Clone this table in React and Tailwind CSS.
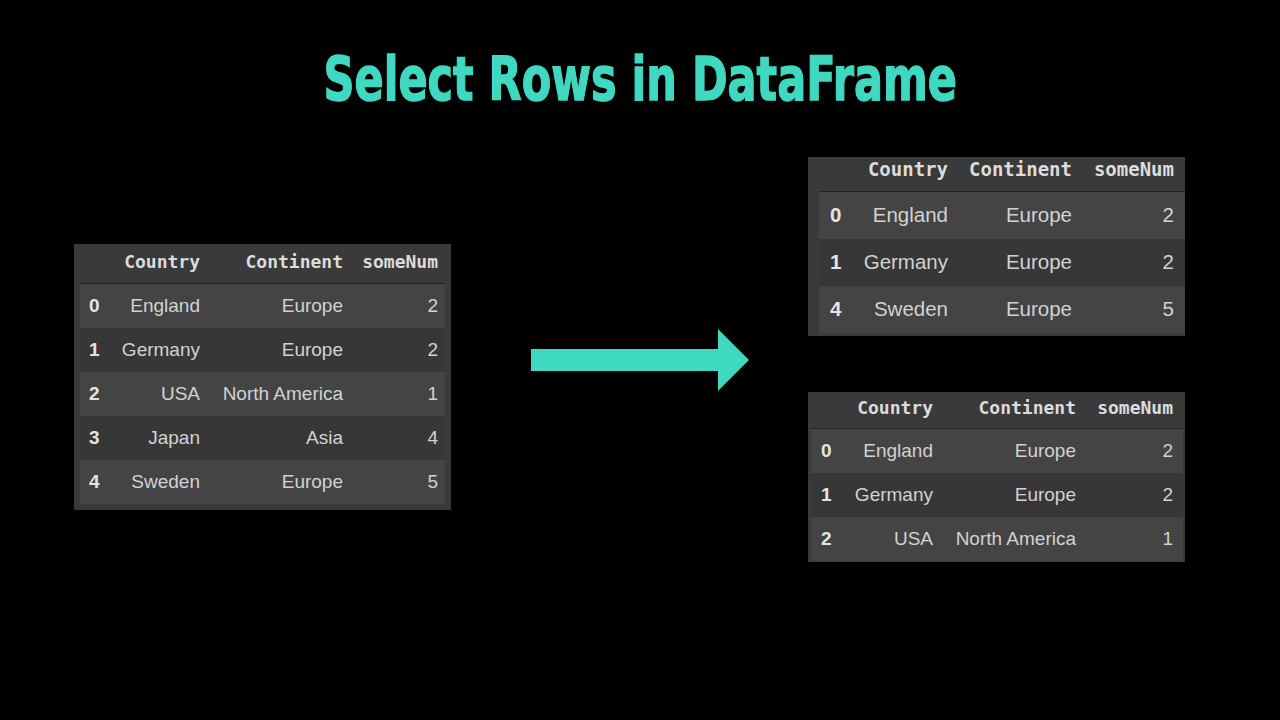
import React from "react";

const leftRows = [
  ["0", "England", "Europe", "2"],
  ["1", "Germany", "Europe", "2"],
  ["2", "USA", "North America", "1"],
  ["3", "Japan", "Asia", "4"],
  ["4", "Sweden", "Europe", "5"],
];
const r1Rows = [
  ["0", "England", "Europe", "2"],
  ["1", "Germany", "Europe", "2"],
  ["4", "Sweden", "Europe", "5"],
];
const r2Rows = [
  ["0", "England", "Europe", "2"],
  ["1", "Germany", "Europe", "2"],
  ["2", "USA", "North America", "1"],
];

const mono = { fontFamily: '"DejaVu Sans Mono", "Liberation Mono", monospace' };
const sans = { fontFamily: '"Liberation Sans", Arial, sans-serif' };

function DF({ rows, widths, headH, headPb, rowH, headSize, bodySize, idxPl, cellPr, box }) {
  return (
    <div className={box}>
      <div className="flex border-b border-[#232323]" style={{ height: headH, paddingBottom: headPb }}>
        <div style={{ width: widths[0] }} />
        {["Country", "Continent", "someNum"].map((h, i) => (
          <div
            key={h}
            className="flex items-center justify-end font-bold text-[#dcdcdc]"
            style={{ ...mono, width: widths[i + 1], paddingRight: cellPr, fontSize: headSize }}
          >
            {h}
          </div>
        ))}
      </div>
      {rows.map((r, ri) => (
        <div
          key={ri}
          className={`flex ${ri % 2 === 0 ? "bg-[#444444]" : "bg-[#373737]"}`}
          style={{ height: rowH }}
        >
          <div
            className="flex items-center font-bold text-[#e4e4e4]"
            style={{ ...sans, width: widths[0], paddingLeft: idxPl, fontSize: bodySize }}
          >
            {r[0]}
          </div>
          {r.slice(1).map((c, ci) => (
            <div
              key={ci}
              className="flex items-center justify-end text-[#d2d2d2] whitespace-nowrap"
              style={{ ...sans, width: widths[ci + 1], paddingRight: cellPr, fontSize: bodySize }}
            >
              {c}
            </div>
          ))}
        </div>
      ))}
    </div>
  );
}

export default function App() {
  return (
    <div className="w-[1280px] h-[720px] bg-black overflow-hidden">
      <div className="h-[157px] flex justify-center pt-[48px]">
        <h1
          className="inline-block text-[#3fd8c0] font-bold leading-none text-[61px] scale-x-[0.705] whitespace-nowrap [-webkit-text-stroke:1.5px_#3fd8c0]"
          style={{ fontFamily: '"DejaVu Sans", sans-serif' }}
        >
          Select Rows in DataFrame
        </h1>
      </div>
      <div className="flex items-start pl-[74px]">
        <div className="mt-[87px]">
          <DF
            rows={leftRows}
            widths={[32, 95, 143, 95]}
            headH={40}
            headPb={4}
            rowH={44}
            headSize={18}
            bodySize={19}
            idxPl={9}
            cellPr={7}
            box="w-[377px] bg-[#3a3a3a] pl-[6px] pr-[6px] pb-[6px]"
          />
        </div>
        <div className="ml-[80px] mt-[172px]">
          <svg width="219" height="62" viewBox="0 0 219 62">
            <polygon points="0,20 187,20 187,0 218,31 187,62 187,42 0,42" fill="#3fd8c0" />
          </svg>
        </div>
        <div className="ml-[58px] flex flex-col">
          <DF
            rows={r1Rows}
            widths={[36, 104, 124, 102]}
            headH={35}
            headPb={10}
            rowH={47}
            headSize={19}
            bodySize={20.5}
            idxPl={11}
            cellPr={11}
            box="w-[377px] bg-[#3a3a3a] pl-[11px] pb-[3px]"
          />
          <div className="mt-[56px]">
            <DF
              rows={r2Rows}
              widths={[34, 98, 143, 97]}
              headH={37}
              headPb={5}
              rowH={44}
              headSize={18}
              bodySize={19}
              idxPl={10}
              cellPr={10}
              box="w-[377px] bg-[#3a3a3a] pl-[3px] pr-[2px] pb-[1px]"
            />
          </div>
        </div>
      </div>
    </div>
  );
}
